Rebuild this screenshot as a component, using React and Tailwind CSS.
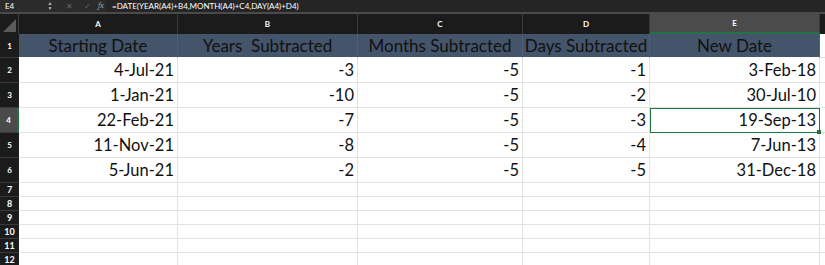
import React from 'react';

const COLS = [
  { key: 'A', w: 'w-[159px]' },
  { key: 'B', w: 'w-[180px]' },
  { key: 'C', w: 'w-[165px]' },
  { key: 'D', w: 'w-[127px]' },
  { key: 'E', w: 'w-[170px]' },
];

const HEADERS = ['Starting Date', 'Years  Subtracted', 'Months Subtracted', 'Days Subtracted', 'New Date'];

const ROWS = [
  ['4-Jul-21', '-3', '-5', '-1', '3-Feb-18'],
  ['1-Jan-21', '-10', '-5', '-2', '30-Jul-10'],
  ['22-Feb-21', '-7', '-5', '-3', '19-Sep-13'],
  ['11-Nov-21', '-8', '-5', '-4', '7-Jun-13'],
  ['5-Jun-21', '-2', '-5', '-5', '31-Dec-18'],
];

const font = { fontFamily: "Lato, 'Open Sans', sans-serif" };

export default function App() {
  return (
    <div className="w-[825px] h-[265px] overflow-hidden bg-white" style={font}>
      {/* formula bar */}
      <div className="flex items-center h-[12px] bg-[#2b2b2b] text-white text-[8px] leading-none">
        <div className="w-[40px] pl-[5px]">E4</div>
        <div className="w-[20px] flex flex-col items-center text-[5px] leading-[5px] text-[#bbb]">
          <span>▲</span><span>▼</span>
        </div>
        <div className="w-[18px] text-center text-[#666]">✕</div>
        <div className="w-[18px] text-center text-[#666]">✓</div>
        <div className="w-[10px] text-center italic text-[#999] font-serif">fx</div>
        <div className="flex-1 h-full flex items-center pl-[6px] bg-[#252525]">
          =DATE(YEAR(A4)+B4,MONTH(A4)+C4,DAY(A4)+D4)
        </div>
      </div>
      <div className="h-[2px] bg-[#4a4a4a]" />
      {/* column headers */}
      <div className="flex h-[20px] bg-[#1b1b1b] text-white text-[8px] font-bold">
        <div className="w-[19px] border-r border-[#3a3a3a] relative overflow-hidden">
          <div className="absolute right-[2px] bottom-[2px] w-0 h-0 border-l-[13px] border-l-transparent border-b-[13px] border-b-[#5a5a5a]" />
        </div>
        {COLS.map((c) => (
          <div
            key={c.key}
            className={`${c.w} flex items-center justify-center border-r border-[#3a3a3a] ${
              c.key === 'E' ? 'bg-[#4b4b4b] border-b-2 border-b-[#217346]' : ''
            }`}
          >
            {c.key}
          </div>
        ))}
        <div className="flex-1" />
      </div>
      {/* row 1 */}
      <div className="flex h-[24px]">
        <RowHead n={1} />
        {HEADERS.map((h, i) => (
          <div
            key={i}
            className={`${COLS[i].w} flex items-center justify-center bg-[#44546a] border-r border-[#4e5e74] border-b border-b-white text-[17px] text-[#111] whitespace-pre`}
          >
            {h}
          </div>
        ))}
        <div className="flex-1 border-b border-[#e0e0e0]" />
      </div>
      {ROWS.map((r, ri) => (
        <div key={ri} className="flex h-[25px]">
          <RowHead n={ri + 2} active={ri === 2} />
          {r.map((v, ci) => {
            const sel = ri === 2 && ci === 4;
            return (
              <div
                key={ci}
                className={`${COLS[ci].w} flex items-center justify-end pr-[3px] text-[16.5px] text-[#111] ${
                  sel
                    ? 'border border-[#217346] relative'
                    : 'border-r border-b border-[#e2e2e2]'
                }`}
              >
                {v}
                {sel && <div className="absolute right-[-2px] bottom-[-2px] w-[4px] h-[4px] bg-[#217346]" />}
              </div>
            );
          })}
          <div className="flex-1 border-b border-[#e2e2e2]" />
        </div>
      ))}
      {[7, 8, 9, 10, 11, 12].map((n) => (
        <div key={n} className="flex h-[14px]">
          <RowHead n={n} small />
          {COLS.map((c) => (
            <div key={c.key} className={`${c.w} border-r border-b border-[#e2e2e2]`} />
          ))}
          <div className="flex-1 border-b border-[#e2e2e2]" />
        </div>
      ))}
    </div>
  );
}

function RowHead({ n, active, small }) {
  return (
    <div
      className={`w-[19px] flex items-center justify-center text-white font-bold ${small ? 'text-[9px]' : 'text-[8px]'} border-b border-[#3a3a3a] ${
        active ? 'bg-[#4b4b4b] border-r-2 border-r-[#217346]' : 'bg-[#1b1b1b]'
      }`}
    >
      {n}
    </div>
  );
}
